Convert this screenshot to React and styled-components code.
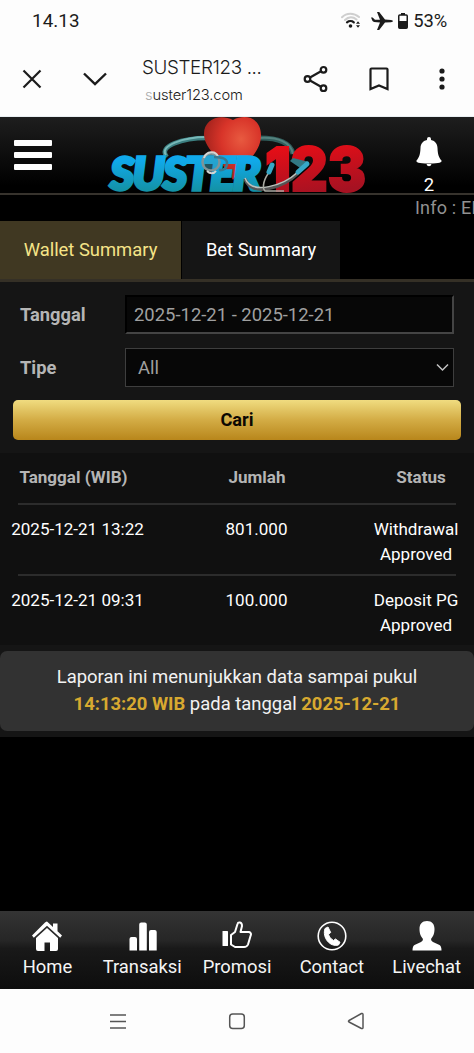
import React from 'react'
import styled, { createGlobalStyle } from 'styled-components'

const COLORS = {
  GOLD: '#d8a930',
  PANEL: '#151515',
  TABLE: '#101010',
  TAB_ACTIVE: '#403822',
  FONT_MUTED: '#b5b5b5',
  INK: '#1b1b1b',
}

const GlobalStyle = createGlobalStyle`
  * {
    box-sizing: border-box;
  }

  body {
    margin: 0;
    background: #000;
    font-family: Roboto, 'Liberation Sans', sans-serif;
  }

  button, input {
    font-family: inherit;
  }
`

const Screen = styled.div`
  display: flex;
  flex-direction: column;
  width: 474px;
  height: 1053px;
  overflow: hidden;
  background: #000;
  color: #fff;

  svg {
    display: block;
    flex: none;
  }
`

/* phone status bar */
const StatusBar = styled.div`
  display: flex;
  align-items: center;
  height: 41px;
  padding: 0 27px 0 32px;
  background: #fdfdfd;
  color: ${COLORS.INK};
`
const Clock = styled.span`
  flex: 1;
  font-size: 18.8px;
  letter-spacing: 0.1px;
`
const Battery = styled.span`
  margin-left: 5px;
  font-size: 18.4px;
  letter-spacing: -0.1px;
`

/* browser toolbar */
const BrowserBar = styled.div`
  display: flex;
  align-items: center;
  height: 76px;
  padding: 0 26px 0 20px;
  background: #fdfdfd;
  border-bottom: 1px solid #e9eff2;
  color: ${COLORS.INK};
`
const PageInfo = styled.div`
  display: flex;
  flex-direction: column;
  width: 130px;
  margin-left: 34px;
  margin-right: 31px;
  padding-top: 5px;
  white-space: nowrap;
`
const PageTitle = styled.div`
  font-family: Inter, sans-serif;
  font-size: 18.8px;
  font-weight: 300;
  line-height: 24px;
  letter-spacing: -0.35px;
`
const PageUrl = styled.div`
  padding: 3px 0 0 3px;
  font-family: Inter, sans-serif;
  font-size: 14.7px;
  font-weight: 300;
  line-height: 24px;
  letter-spacing: -0.1px;

  span {
    color: #aaa;
  }
`

/* site header */
const Header = styled.header`
  display: flex;
  align-items: flex-start;
  height: 78px;
  background: linear-gradient(#1e1e1e, #000 90%);
  border-bottom: 2px solid #37332d;
`
const Burger = styled.div`
  display: flex;
  flex-direction: column;
  gap: 6px;
  width: 38px;
  margin: 23px 0 0 14px;

  i {
    height: 6px;
    border-radius: 1px;
    background: #fff;
  }
`
const LogoWrap = styled.div`
  margin-left: 54px;

  svg {
    overflow: visible;
  }
`
const Alerts = styled.div`
  display: flex;
  flex-direction: column;
  align-items: center;
  width: 40px;
  margin: 20px 0 0 43px;
  font-size: 18.5px;
  line-height: 22px;

  span {
    margin-top: 6px;
  }
`
const Ticker = styled.div`
  height: 26px;
  padding-left: 415px;
  overflow: hidden;
  color: #919191;
  font-size: 18px;
  line-height: 26px;
  letter-spacing: 0.2px;
  white-space: nowrap;
`

const Tabs = styled.div`
  display: flex;
  gap: 1px;
  height: 61px;
  border-bottom: 3px solid #353026;
`
const Tab = styled.div`
  width: ${({ $width }) => $width}px;
  background: ${({ $active }) => ($active ? COLORS.TAB_ACTIVE : COLORS.PANEL)};
  color: ${({ $active }) => ($active ? '#f5e488' : '#fff')};
  font-size: 18.4px;
  line-height: 57px;
  text-align: center;
`

const Form = styled.div`
  display: flex;
  flex-direction: column;
  height: 171px;
  padding: 13px 13px 0;
  background: ${COLORS.PANEL};
`
const Field = styled.div`
  display: flex;
  align-items: center;
  height: 39px;
  margin: 0 7px 13.5px;
`
const Label = styled.label`
  width: 105px;
  color: ${COLORS.FONT_MUTED};
  font-size: 18.3px;
  font-weight: 700;
`
const DateInput = styled.input`
  width: 329px;
  height: 39px;
  padding: 0 7px;
  border: 2px inset #4a4a4a;
  border-color: #050505 #444 #444 #050505;
  outline: none;
  background: #070707;
  color: #a0a0a0;
  font-size: 18.45px;
`
const Select = styled.div`
  display: flex;
  align-items: center;
  justify-content: space-between;
  width: 329px;
  height: 39px;
  padding: 0 4px 0 12px;
  border: 1px solid #3e3e3e;
  background: #070707;
  color: #a0a0a0;
  font-size: 18.4px;
`
const Submit = styled.button`
  height: 39.5px;
  padding: 0 0 1px;
  border: 0;
  border-radius: 5px;
  background: linear-gradient(#f0dc80, #d3ac45 50%, #b8861b);
  color: #0c0802;
  font-size: 18.2px;
  font-weight: 700;
`

const Table = styled.div`
  height: 192px;
  background: ${COLORS.TABLE};
  font-size: 17.05px;
  line-height: 24.5px;
`
const HeadRow = styled.div`
  display: grid;
  grid-template-columns: 147px 220px 108px;
  height: 50px;
  padding-top: 12px;
  color: ${COLORS.FONT_MUTED};
  font-weight: 700;
  text-align: center;
`
const Rule = styled.div`
  height: 2px;
  margin: 0 18px;
  background: #2c2c2c;
`
const Row = styled.div`
  display: grid;
  grid-template-columns: 155px 203px 116px;
  height: 69px;
  padding-top: 12px;
  text-align: center;
`
const Cell = styled.div`
  padding: 0 11px;
  white-space: nowrap;

  &:last-child {
    white-space: pre-line;
  }
`

const NoticeWrap = styled.div`
  height: 92px;
  padding-top: 6px;
  background: ${COLORS.PANEL};
`
const Notice = styled.div`
  height: 80px;
  padding-top: 13px;
  border-radius: 7px;
  background: #323232;
  color: #f2f2f2;
  font-size: 18.45px;
  line-height: 26.5px;
  text-align: center;

  strong {
    color: ${COLORS.GOLD};
  }
`

const BottomNav = styled.nav`
  display: grid;
  grid-template-columns: repeat(5, 1fr);
  height: 78px;
  margin-top: auto;
  background: linear-gradient(#343434, #262626 38%, #191919 48%, #0d0d0d);
`
const NavItem = styled.div`
  display: flex;
  flex-direction: column;
  align-items: center;
  padding-top: 10px;
  color: #f5f5f5;
  font-size: 18.4px;
  line-height: 24px;
  white-space: nowrap;

  svg {
    margin-bottom: 4px;
  }
`
const SystemNav = styled.div`
  display: flex;
  justify-content: space-between;
  height: 64px;
  padding: 22px 108px 0;
  background: #fdfdfd;
`

const WifiIcon = () => (
  <svg width='20' height='17' viewBox='0 0 20 17' fill='none' strokeLinecap='round'>
    <path d='M1 5.2C5.500 .5 13 .5 18 5M4 8C7.500 4.500 12 4.500 15.500 7.500' stroke='#cfcfcf' strokeWidth='2' />
    <path d='M6 10.400C8 8.800 11 8.800 12.800 10.400' stroke='#1b1b1b' strokeWidth='2.200' />
    <circle cx='9.500' cy='14' r='1.800' fill='#1b1b1b' />
    <path d='M15 11.700L17 9.200L19 11.700ZM15 13.300L17 15.800L19 13.300Z' fill='#1b1b1b' />
  </svg>
)

const PlaneIcon = () => (
  <svg width='22' height='18' viewBox='0 0 22 18'>
    <path
      d='M0 5.500H1.600L4 7.800H9L6 0H8.200L14 7.600L20 7.900Q22 8.200 22 9Q22 10 20 10.200L14 10.500L8.200 18H6L9 10.400L3 10.100L1.500 9Z'
      fill='#1b1b1b'
    />
  </svg>
)

const BatteryIcon = () => (
  <svg width='10' height='16' viewBox='0 0 10 16'>
    <path d='M3 0H7V2H3Z' fill='#1b1b1b' />
    <rect x='.75' y='2' width='8.500' height='13.200' rx='1' fill='#fff' stroke='#1b1b1b' strokeWidth='1.500' />
    <path d='M1 8H9V15H1Z' fill='#1b1b1b' />
  </svg>
)

const Logo = () => (
  <svg width='260' height='76' viewBox='106 117 260 76'>
    <defs>
      <linearGradient id='cyan' x1='0' y1='0' x2='0' y2='1'>
        <stop offset='.3' stopColor='#10a9ea' />
        <stop offset='.9' stopColor='#148f9d' />
      </linearGradient>
      <linearGradient id='red' x1='0' y1='0' x2='.2' y2='1'>
        <stop offset='.2' stopColor='#e90d16' />
        <stop offset='.9' stopColor='#a61222' />
      </linearGradient>
      <radialGradient id='heart' cx='.65' cy='.35' r='.7'>
        <stop offset='0' stopColor='#e85a40' />
        <stop offset='.5' stopColor='#d83429' />
        <stop offset='1' stopColor='#9d201b' />
      </radialGradient>
    </defs>
    <path d='M167 157C157 146 183 138 207 138' fill='none' stroke='#3c7f81' strokeWidth='4.500' />
    <path d='M166 155C159 146 183 137 207 137' fill='none' stroke='#78b9b9' strokeWidth='2' />
    <path d='M260 138C278 138 291 143 293 154' fill='none' stroke='#315e5c' strokeWidth='5' />
    <path d='M260 138C278 137 291 142 293 154' fill='none' stroke='#54827e' strokeWidth='2' />
    <path
      d='M233 120C219 113 203 120 204 135C205 150 222 160 233 180C243 164 261 154 261 135C261 119 247 113 233 120Z'
      fill='url(#heart)'
    />
    <text
      x='110'
      y='190'
      textLength='151'
      lengthAdjust='spacing'
      fill='url(#cyan)'
      stroke='url(#cyan)'
      strokeWidth='3.400'
      fontFamily='Lato, sans-serif'
      fontSize='46.500'
      fontWeight='900'
      fontStyle='italic'
    >
      SUSTER
    </text>
    <circle cx='211' cy='162' r='8.500' fill='#38a0b8' fillOpacity='.5' stroke='#7f9498' strokeWidth='2.500' />
    <path d='M204 158C206 151 216 150 218 157M207 171C210 174 214 174 216 171' fill='none' stroke='#d3d5d3' strokeWidth='2' />
    <path d='M214 157Q228 157 227 164T219 170' fill='none' stroke='#367b92' strokeWidth='2.500' />
    <text
      x='265'
      y='190.500'
      textLength='101'
      lengthAdjust='spacingAndGlyphs'
      fill='url(#red)'
      stroke='url(#red)'
      strokeWidth='2'
      fontFamily='Inter, sans-serif'
      fontSize='61'
      fontWeight='900'
    >
      123
    </text>
    <path d='M293 158L309 162L303 170L290 161Z' fill='#327984' />
    <path d='M245 179C252 198 284 187 298 173' fill='none' stroke='#555' strokeWidth='3.500' />
    <path d='M245 178C252 196 284 185 298 172' fill='none' stroke='#bbc1bd' strokeWidth='1.500' />
    <path d='M271 170C263 179 262 188 265 191H284' fill='none' stroke='#a9aaa2' strokeWidth='1.600' />
    <path d='M298 172L307 164M269 172L272 165' fill='none' stroke='#36a8c7' strokeWidth='5' strokeLinecap='round' />
  </svg>
)

const BellIcon = () => (
  <svg width='26' height='31' viewBox='0 0 26 31' fill='#fff'>
    <path d='M11 3V2Q11 0 13 0T15 2V3C19.500 4 21.300 7 21.500 11C21.800 18 23 20.500 25.500 23.500C26 25.500 24 26.500 13 26.500S0 25.500 .5 23.500C3 20.500 4.200 18 4.500 11C4.700 7 6.500 4 11 3Z' />
    <path d='M10.500 27H15.500Q15 29.300 13 29.300T10.500 27Z' />
  </svg>
)

const HomeIcon = () => (
  <svg width='30' height='30' viewBox='0 0 30 30' fill='#fff'>
    <path d='M15 .5L21 6V2.500H25.500V10.200L30 14.400L28.200 16.700L15 4.700L1.800 16.700L0 14.400L13 1.600Q15 0 15 .5Z' />
    <path d='M4 17L15 7L26 17V28Q26 30 24 30H18V21.500H12.500V30H6Q4 30 4 28Z' />
  </svg>
)

const ChartIcon = () => (
  <svg width='30' height='30' viewBox='-2.500 .5 30 30' fill='#fff'>
    <path d='M0 30V18.500Q0 16.500 2 16.500H5.500Q7.500 16.500 7.500 18.500V30ZM9.700 30V4Q9.700 2 11.700 2H15.300Q17.300 2 17.300 4V30ZM19.500 30V11.500Q19.500 9.500 21.500 9.500H25.200Q27.200 9.500 27.200 11.500V30Z' />
  </svg>
)

const LikeIcon = () => (
  <svg width='30' height='30' viewBox='0 0 30 30'>
    <rect x='.5' y='10' width='5.500' height='15' rx='.6' fill='#fff' />
    <path
      d='M9 14L13 11L15.500 3Q16 1 18 1.500T20 5L18.500 11H27Q30 12 28.500 15L26 23.500Q25 26 22 26H13L9 23.500Z'
      fill='none'
      stroke='#fff'
      strokeWidth='2'
      strokeLinejoin='round'
    />
  </svg>
)

const PhoneIcon = () => (
  <svg width='30' height='30' viewBox='0 0 30 30'>
    <circle cx='15' cy='15' r='13.800' fill='none' stroke='#fff' strokeWidth='1.600' />
    <path
      d='M8 7.500L11 6L13.700 11.500L11.500 13.200C12 15.800 14 18 16.500 19.500L18.500 18L23 21.200L21.500 24C13 26.500 5 16.500 8 7.500Z'
      fill='#fff'
      stroke='#fff'
      strokeLinejoin='round'
    />
  </svg>
)

const UserIcon = () => (
  <svg width='30' height='30' viewBox='0 0 30 30' fill='#fff'>
    <path d='M15 0C20 0 22.500 3 22.500 8C22.500 13 21 15.500 19 18Q19 20 21 21L27.500 24Q29.500 25 29.500 29.500H.5Q.5 25 2.500 24L9 21Q11 20 11 18C9 15.500 7.500 13 7.500 8C7.500 3 10 0 15 0Z' />
  </svg>
)

const NAV = [
  { label: 'Home', Icon: HomeIcon },
  { label: 'Transaksi', Icon: ChartIcon },
  { label: 'Promosi', Icon: LikeIcon },
  { label: 'Contact', Icon: PhoneIcon },
  { label: 'Livechat', Icon: UserIcon },
]

const ROWS = [
  { date: '2025-12-21 13:22', amount: '801.000', status: 'Withdrawal\nApproved' },
  { date: '2025-12-21 09:31', amount: '100.000', status: 'Deposit PG\nApproved' },
]

const StatusIcons = styled.div`
  display: flex;
  align-items: center;

  svg:nth-child(2) {
    margin-left: 10px;
  }

  svg:nth-child(3) {
    margin-left: 5px;
  }
`
const ToolbarActions = styled.div`
  display: flex;
  align-items: center;

  svg:nth-child(2) {
    margin-left: 40px;
  }

  svg:nth-child(3) {
    margin-left: 50px;
  }
`
const ToolbarNav = styled.div`
  display: flex;
  align-items: center;
  gap: 38px;
`

const Toolbar = () => (
  <BrowserBar>
    <ToolbarNav>
      <svg width='24' height='24' viewBox='0 0 24 24' stroke={COLORS.INK} strokeWidth='2.200'>
        <path d='M3.500 3.500L20.500 20.500M20.500 3.500L3.500 20.500' />
      </svg>
      <svg width='26' height='24' viewBox='0 0 26 24' fill='none' stroke={COLORS.INK} strokeWidth='2.400'>
        <path d='M2 6.500L13 17L24 6.500' />
      </svg>
    </ToolbarNav>
    <PageInfo>
      <PageTitle>SUSTER123 ...</PageTitle>
      <PageUrl>
        <span>s</span>uster123.com
      </PageUrl>
    </PageInfo>
    <ToolbarActions>
      <svg width='26' height='28' viewBox='0 0 26 28' fill='none' stroke={COLORS.INK} strokeWidth='2.200'>
        <circle cx='4.500' cy='14' r='2.800' />
        <circle cx='20.500' cy='4.800' r='2.800' />
        <circle cx='20.500' cy='23.200' r='2.800' />
        <path d='M7 12.500L18 6.300M7 15.500L18 21.700' />
      </svg>
      <svg width='20' height='24' viewBox='0 0 20 24' fill='none' stroke={COLORS.INK} strokeWidth='2.200'>
        <path d='M1.500 2.500Q1.500 1.500 2.500 1.500H17.500Q18.500 1.500 18.500 2.500V22L10 18.500L1.500 22Z' />
      </svg>
      <svg width='6' height='24' viewBox='0 0 6 24' fill={COLORS.INK}>
        <circle cx='3' cy='4' r='2.600' />
        <circle cx='3' cy='12' r='2.600' />
        <circle cx='3' cy='20' r='2.600' />
      </svg>
    </ToolbarActions>
  </BrowserBar>
)

const App = () => {
  return (
    <Screen>
      <GlobalStyle />
      <StatusBar>
        <Clock>14.13</Clock>
        <StatusIcons>
          <WifiIcon />
          <PlaneIcon />
          <BatteryIcon />
        </StatusIcons>
        <Battery>53%</Battery>
      </StatusBar>
      <Toolbar />

      <Header>
        <Burger>
          <i />
          <i />
          <i />
        </Burger>
        <LogoWrap>
          <Logo />
        </LogoWrap>
        <Alerts>
          <BellIcon />
          <span>2</span>
        </Alerts>
      </Header>
      <Ticker>Info : EN</Ticker>

      <Tabs>
        <Tab $active $width={181}>Wallet Summary</Tab>
        <Tab $width={158}>Bet Summary</Tab>
      </Tabs>
      <Form>
        <Field>
          <Label>Tanggal</Label>
          <DateInput readOnly value='2025-12-21 - 2025-12-21' />
        </Field>
        <Field>
          <Label>Tipe</Label>
          <Select>
            All
            <svg width='13' height='9' viewBox='0 0 13 9' fill='none' stroke='#c4c4c4' strokeWidth='1.500'>
              <path d='M1 1.500L6.500 7L12 1.500' />
            </svg>
          </Select>
        </Field>
        <Submit>Cari</Submit>
      </Form>

      <Table>
        <HeadRow>
          <div>Tanggal (WIB)</div>
          <div>Jumlah</div>
          <div>Status</div>
        </HeadRow>
        {ROWS.map(row => (
          <React.Fragment key={row.date}>
            <Rule />
            <Row>
              <Cell>{row.date}</Cell>
              <Cell>{row.amount}</Cell>
              <Cell>{row.status}</Cell>
            </Row>
          </React.Fragment>
        ))}
      </Table>
      <NoticeWrap>
        <Notice>
          Laporan ini menunjukkan data sampai pukul
          <br />
          <strong>14:13:20 WIB</strong> pada tanggal <strong>2025-12-21</strong>
        </Notice>
      </NoticeWrap>

      <BottomNav>
        {NAV.map(({ label, Icon }) => (
          <NavItem key={label}>
            <Icon />
            {label}
          </NavItem>
        ))}
      </BottomNav>
      <SystemNav>
        <svg width='20' height='20' viewBox='0 0 20 20' stroke='#555' strokeWidth='1.700'>
          <path d='M2 4H18M2 10.500H18M2 17H18' />
        </svg>
        <svg width='20' height='20' viewBox='0 0 20 20' fill='none' stroke='#555' strokeWidth='1.500'>
          <rect x='2.700' y='3' width='14.600' height='14.600' rx='3' />
        </svg>
        <svg width='20' height='20' viewBox='0 0 20 20' fill='none' stroke='#555' strokeWidth='1.500' strokeLinejoin='round'>
          <path d='M3 9.500L15.500 2.500Q17 2 17 3.500V16.500Q17 18 15.500 17.500L3 11Q2 10.200 3 9.500Z' />
        </svg>
      </SystemNav>
    </Screen>
  )
}

export default App
